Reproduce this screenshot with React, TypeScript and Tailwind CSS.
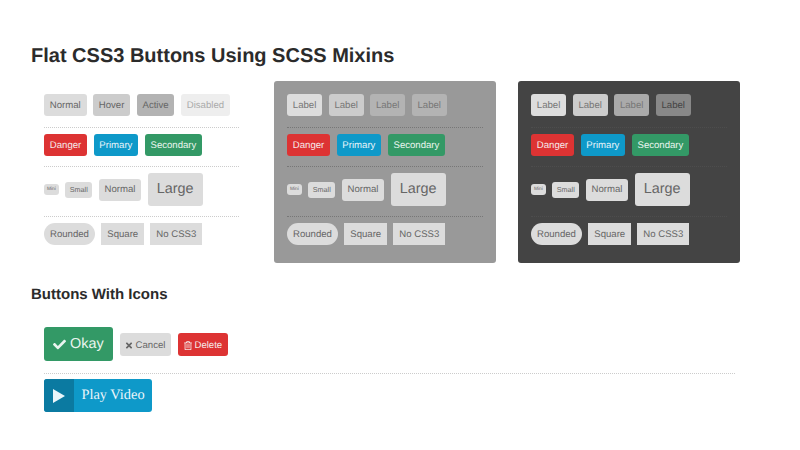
import type { ReactNode } from 'react';
import { FaCheck, FaRegTrashAlt, FaTimes } from 'react-icons/fa';

type BtnProps = {
  children: ReactNode;
  className?: string;
};

const DEFAULT_BTN = 'bg-[#dcdcdc] text-[#666]';
const normal = 'h-[22px] px-[5.8px] pt-[2px] text-[9.6px] rounded-[3px]';

function Btn({ children, className = `${normal} ${DEFAULT_BTN}` }: BtnProps) {
  return <span className={`inline-flex items-center justify-center whitespace-nowrap ${className}`}>{children}</span>;
}

function Row({ children, rule, first, last }: { children: ReactNode; rule: string; first?: boolean; last?: boolean }) {
  const spacing = last ? 'pt-[6px]' : `pt-[6px] ${first ? 'pb-[11px]' : 'pb-[10px]'} border-b border-dotted ${rule}`;
  return (
    <div className={spacing}>
      <div className="flex items-center gap-[6.5px]">{children}</div>
    </div>
  );
}

function ColorRow({ rule }: { rule: string }) {
  return (
    <Row rule={rule}>
      <Btn className={`${normal} bg-[#dd3333] text-[#f5eaea]`}>Danger</Btn>
      <Btn className={`${normal} bg-[#0e99c9] text-[#eaf5fa]`}>Primary</Btn>
      <Btn className={`${normal} bg-[#339966] text-[#eaf5ef]`}>Secondary</Btn>
    </Row>
  );
}

function SizeRows({ rule }: { rule: string }) {
  return (
    <>
      <Row rule={rule}>
        <Btn className="h-[11px] px-[3px] text-[4.8px] rounded-[3px] bg-[#dcdcdc] text-[#666]">Mini</Btn>
        <Btn className="h-[16px] px-[4.5px] pt-[1px] text-[7.2px] rounded-[3px] bg-[#dcdcdc] text-[#666]">Small</Btn>
        <Btn className={`${normal} ${DEFAULT_BTN}`}>Normal</Btn>
        <Btn className="h-[33px] px-[9px] pt-[1px] text-[14.4px] rounded-[3px] bg-[#dcdcdc] text-[#666]">Large</Btn>
      </Row>
      <Row rule={rule} last>
        <Btn className={`h-[22px] px-[6px] pt-[2px] text-[9.6px] rounded-full ${DEFAULT_BTN}`}>Rounded</Btn>
        <Btn className={`h-[22px] px-[5.8px] pt-[2px] text-[9.6px] ${DEFAULT_BTN}`}>Square</Btn>
        <Btn className={`h-[22px] px-[5.8px] pt-[2px] text-[9.6px] ${DEFAULT_BTN}`}>No CSS3</Btn>
      </Row>
    </>
  );
}

export default function App() {
  return (
    <div className="w-[800px] h-[450px] overflow-hidden bg-white pl-[31px] pt-[43px] font-['Liberation_Sans',Arial,sans-serif] text-[#2b2b2b] [text-rendering:geometricPrecision]">
      <h1 className="text-[20px] leading-[26px] font-bold">Flat CSS3 Buttons Using SCSS Mixins</h1>

      <div className="grid grid-cols-[221px_222px_222px] gap-[22px] mt-[12px]">
        <div className="h-[182px] px-[13px] pt-[7px]">
          <Row rule="border-[#ccc]" first>
            <Btn>Normal</Btn>
            <Btn className={`${normal} bg-[#cccccc] text-[#666]`}>Hover</Btn>
            <Btn className={`${normal} bg-[#b3b3b3] text-[#666]`}>Active</Btn>
            <Btn className={`${normal} bg-[#eeeeee] text-[#aaa]`}>Disabled</Btn>
          </Row>
          <ColorRow rule="border-[#ccc]" />
          <SizeRows rule="border-[#ccc]" />
        </div>

        <div className="h-[182px] px-[13px] pt-[7px] rounded-[3px] bg-[#999999]">
          <Row rule="border-[#777]" first>
            <Btn className={`${normal} bg-[#dddddd] text-[#777]`}>Label</Btn>
            <Btn className={`${normal} bg-[#cccccc] text-[#777]`}>Label</Btn>
            <Btn className={`${normal} bg-[#b3b3b3] text-[#777]`}>Label</Btn>
            <Btn className={`${normal} bg-[#b3b3b3] text-[#777]`}>Label</Btn>
          </Row>
          <ColorRow rule="border-[#777]" />
          <SizeRows rule="border-[#777]" />
        </div>

        <div className="h-[182px] px-[13px] pt-[7px] rounded-[3px] bg-[#444444]">
          <Row rule="border-[#4d4d4d]" first>
            <Btn className={`${normal} bg-[#dddddd] text-[#777]`}>Label</Btn>
            <Btn className={`${normal} bg-[#cccccc] text-[#777]`}>Label</Btn>
            <Btn className={`${normal} bg-[#aaaaaa] text-[#777]`}>Label</Btn>
            <Btn className={`${normal} bg-[#888888] text-[#444]`}>Label</Btn>
          </Row>
          <ColorRow rule="border-[#4d4d4d]" />
          <SizeRows rule="border-[#4d4d4d]" />
        </div>
      </div>

      <h2 className="text-[15px] leading-[18px] font-bold mt-[23px]">Buttons With Icons</h2>

      <div className="w-[691px] ml-[13px] mt-[23px]">
        <div className="flex items-center gap-[7px] pb-[12px] border-b border-dotted border-[#ccc]">
          <Btn className="h-[34px] px-[9px] pt-[2px] gap-[4px] text-[14.4px] rounded-[3px] bg-[#339966] text-[#eaf5ef]">
            <FaCheck className="w-[13px] h-[13px] -mt-[1px]" />
            Okay
          </Btn>
          <Btn className="h-[23px] mt-[1px] px-[5.5px] pt-[3px] gap-[2.5px] text-[9.6px] rounded-[3px] bg-[#dcdcdc] text-[#666]">
            <FaTimes className="w-[8px] h-[9px] -mt-[2px]" />
            Cancel
          </Btn>
          <Btn className="h-[23px] mt-[1px] px-[6px] pt-[3px] gap-[2.5px] text-[9.6px] rounded-[3px] bg-[#dd3333] text-[#f5eaea]">
            <FaRegTrashAlt className="w-[8px] h-[9px] -mt-[2px]" />
            Delete
          </Btn>
        </div>
        <div className="mt-[5px] flex w-[108px] h-[33px] rounded-[3px] overflow-hidden bg-[#0e99c9] text-[#eaf5fa]">
          <span className="w-[30px] flex items-center justify-center bg-[#0b7aa1]">
            <svg viewBox="0 0 12 14" className="w-[12px] h-[14px]" fill="currentColor">
              <polygon points="0,0 12,7 0,14" />
            </svg>
          </span>
          <span className="flex-1 flex items-center justify-center pt-[1px] font-['Liberation_Serif',serif] text-[14.4px]">
            Play Video
          </span>
        </div>
      </div>
    </div>
  );
}
